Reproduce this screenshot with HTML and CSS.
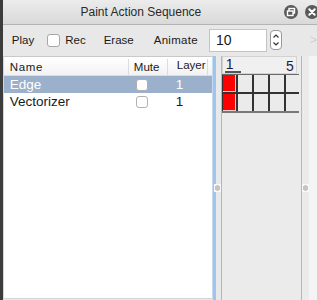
FILE: index.html
```html
<!DOCTYPE html>
<html>
<head>
	<meta charset="utf-8">
	<title>Paint Action Sequence</title>
	<link rel="stylesheet" href="styles.css">
</head>
<body>
	<div class="window">
		<div class="edge"></div>
		<div class="main">
			<!--标题栏-->
			<div class="titlebar">
				<span class="title">Paint Action Sequence</span>
				<div class="winbtns">
					<span class="wbtn">
						<svg width="14" height="14" viewBox="0 0 14 14">
							<rect x="5" y="3.5" width="5.5" height="4.5" fill="none" stroke="#fff" stroke-width="1.4"/>
							<rect x="3.5" y="6" width="5.5" height="4.5" fill="#5a5a5a" stroke="#fff" stroke-width="1.4"/>
						</svg>
					</span>
					<span class="wbtn">
						<svg width="14" height="14" viewBox="0 0 14 14">
							<path d="M4.3 4.3 L9.7 9.7 M9.7 4.3 L4.3 9.7" stroke="#fff" stroke-width="2" stroke-linecap="round"/>
						</svg>
					</span>
				</div>
			</div>
			<!--工具栏-->
			<div class="toolbar">
				<span class="tool tool-play">Play</span>
				<span class="check check-rec"></span>
				<span class="tool tool-rec">Rec</span>
				<span class="tool tool-erase">Erase</span>
				<span class="tool tool-animate">Animate</span>
				<span class="field">10</span>
				<span class="spin">
					<svg width="8" height="16" viewBox="0 0 8 16">
						<path d="M1.5 5.5 L4 3 L6.5 5.5 M1.5 10.5 L4 13 L6.5 10.5" fill="none" stroke="#333" stroke-width="1.2"/>
					</svg>
				</span>
				<span class="more">&gt;</span>
			</div>
			<!--内容-->
			<div class="content">
				<div class="tablepane">
					<div class="row head">
						<span class="col-name">Name</span>
						<span class="col-mute">Mute</span>
						<span class="col-layer">Layer</span>
					</div>
					<div class="row selected">
						<span class="col-name">Edge</span>
						<span class="col-mute"><span class="check"></span></span>
						<span class="col-layer">1</span>
					</div>
					<div class="row">
						<span class="col-name">Vectorizer</span>
						<span class="col-mute"><span class="check"></span></span>
						<span class="col-layer">1</span>
					</div>
				</div>
				<div class="focusbar"></div>
				<div class="divider"><span class="grip"></span></div>
				<div class="gridpane">
					<div class="ruler">
						<span class="mark mark-first">1</span>
						<span class="mark">5</span>
					</div>
					<div class="grid">
						<div class="grow">
							<span class="cell on"></span><span class="cell"></span><span class="cell"></span><span class="cell"></span><span class="cell last"></span>
						</div>
						<div class="grow">
							<span class="cell on"></span><span class="cell"></span><span class="cell"></span><span class="cell"></span><span class="cell last"></span>
						</div>
					</div>
				</div>
				<div class="strip"><span class="grip"></span></div>
			</div>
		</div>
	</div>
</body>
</html>
```

FILE: styles.css
```css
* {
	margin: 0;
	padding: 0;
	box-sizing: border-box;
}

body {
	width: 317px;
	height: 300px;
	overflow: hidden;
	font-family: "Liberation Sans", Arial, sans-serif;
	color: #1a1a1a;
	background-color: #e8e8e8;
}

.window {
	display: flex;
	height: 300px;
}

.edge {
	width: 4px;
	background-color: #3c3c3c;
}

.main {
	flex: 1;
	display: flex;
	flex-direction: column;
}

.titlebar {
	height: 25px;
	display: flex;
	align-items: center;
	justify-content: center;
	position: relative;
	padding-right: 38px;
	background: linear-gradient(#ececec, #d9d9d9);
	border-bottom: 1px solid #b4b4b4;
}

.title {
	font-size: 12px;
	color: #2a2a2a;
}

.winbtns {
	position: absolute;
	top: 5px;
	left: 281px;
	display: flex;
	gap: 7px;
}

.wbtn {
	width: 14px;
	height: 14px;
	border-radius: 50%;
	background-color: #5a5a5a;
	display: flex;
}

.toolbar {
	height: 30px;
	display: flex;
	align-items: center;
	font-size: 11.5px;
	background-color: #e8e8e8;
}

.tool-play {
	margin-left: 9px;
}

.check {
	display: inline-block;
	width: 13px;
	height: 13px;
	border: 1px solid #a8a8a8;
	border-radius: 3px;
	background-color: #fff;
}

.check-rec {
	margin-left: 13px;
}

.tool-rec {
	margin-left: 5px;
}

.tool-erase {
	margin-left: 18px;
}

.tool-animate {
	margin-left: 20px;
	letter-spacing: 0.3px;
}

.field {
	margin-left: 11px;
	width: 58px;
	height: 23px;
	padding: 2px 0 0 6px;
	font-size: 14px;
	background-color: #fff;
	border: 1px solid #c4c4c4;
}

.spin {
	margin-left: 3px;
	width: 12px;
	height: 20px;
	border: 1px solid #9a9a9a;
	border-radius: 4px;
	background-color: #fff;
	display: flex;
	align-items: center;
	justify-content: center;
}

.more {
	margin-left: 28px;
	color: #cfcfcf;
	font-size: 12px;
}

.content {
	flex: 1;
	display: flex;
	padding-top: 1px;
}

.tablepane {
	width: 210px;
	height: 243px;
	background-color: #fff;
	border: 1px solid #c8d9ee;
	border-top-color: #c9c9c9;
	border-bottom-color: #d6d6d6;
}

.row {
	display: flex;
	align-items: center;
	height: 17px;
	font-size: 13.5px;
}

.row.head {
	height: 18px;
	margin-top: 1px;
	font-size: 11.5px;
	background: linear-gradient(#ffffff, #f2f2f2);
	border-bottom: 1px solid #dcdcdc;
}

.row.selected {
	background-color: #9bb0ca;
	color: #fff;
}

.col-name {
	width: 124px;
	padding-left: 6px;
}

.col-mute {
	width: 39px;
	padding-left: 5px;
	display: flex;
}

.col-layer {
	width: 41px;
	padding-left: 5px;
}

.head .col-name {
	letter-spacing: 0.6px;
}

.head .col-mute,
.head .col-layer {
	border-left: 1px solid #dcdcdc;
	height: 16px;
	align-items: center;
}

.head .col-layer {
	padding-left: 4px;
	border-right: 1px solid #dcdcdc;
}

.row .col-mute .check {
	margin-left: 3px;
	width: 12px;
	height: 12px;
	border-color: #b0b0b0;
}

.row .col-layer {
	padding-left: 9px;
}

.focusbar {
	width: 3px;
	background-color: #9cc5f0;
}

.divider,
.strip {
	position: relative;
	background-color: #e9e9e9;
}

.divider {
	width: 6px;
	border-right: 1px solid #b6b6b6;
}

.strip {
	flex: 1;
	border-left: 1px solid #b6b6b6;
	background: linear-gradient(90deg, #ebebeb 0, #ebebeb 7px, #f4f4f4 7px);
}

.grip {
	position: absolute;
	top: 128px;
	left: -2px;
	width: 7px;
	height: 8px;
	background: radial-gradient(circle, #c4c4c4 2.5px, #f8f8f8 3px);
}

.strip .grip {
	left: 0;
}

.gridpane {
	width: 79px;
	background-color: #ebebeb;
}

.ruler {
	display: flex;
	justify-content: space-between;
	align-items: flex-end;
	width: 75px;
	height: 18px;
	padding: 0 2px 0 2px;
	background-color: #f0f0f0;
	border: 1px solid #d2d2d2;
	font-size: 14px;
	line-height: 14px;
	color: #1c1c3c;
}

.mark-first {
	width: 16px;
	border-bottom: 2px solid #555;
	padding-left: 1px;
}

.grid {
	width: 77px;
	border-top: 1px solid #6a6a6a;
}

.grow {
	display: flex;
	border-bottom: 2px solid #333;
}

.grow:last-child {
	border-bottom-color: #777;
}

.cell {
	width: 16px;
	height: 17px;
	border-right: 2px solid #333;
}

.cell.on {
	background-color: #f00;
	border-left: 1px solid #333;
	box-shadow: inset -1px -1px 0 #f6d0d0;
}

.cell.last {
	width: 12px;
	border-right: 0;
}
```
